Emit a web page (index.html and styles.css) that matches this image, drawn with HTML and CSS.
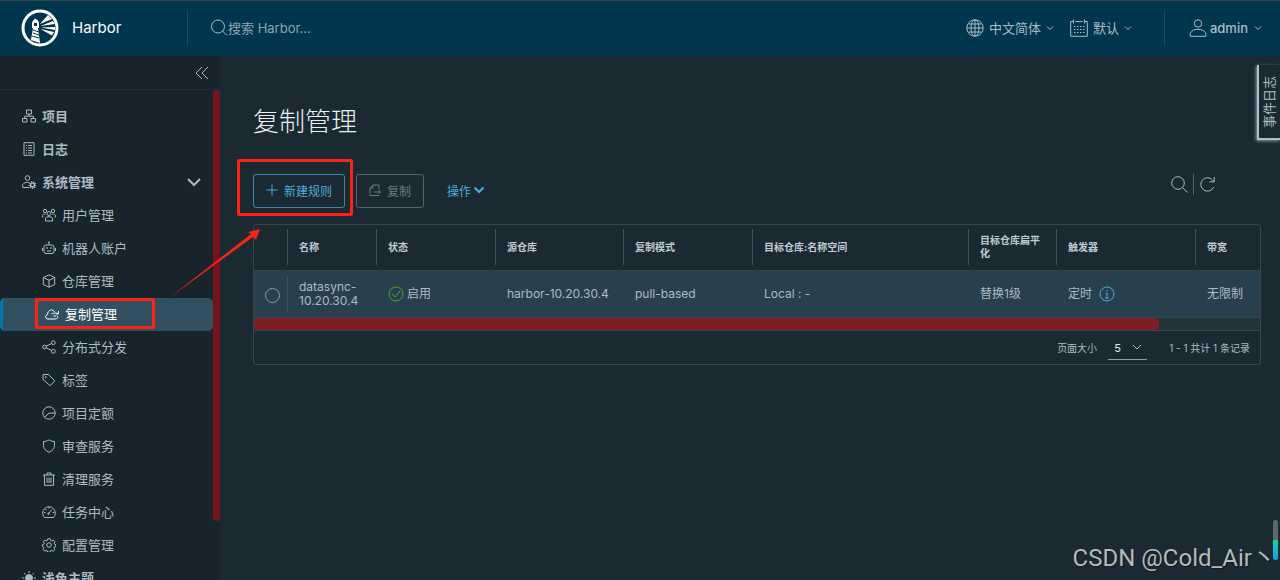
FILE: index.html
```html
<!DOCTYPE html>
<html lang="zh-CN">
<head>
    <meta charset="UTF-8">
    <meta name="viewport" content="width=device-width, initial-scale=1.0">
    <title>Harbor</title>
    <link rel="stylesheet" href="styles.css">
</head>
<body>
    <header class="header">
        <a class="brand" href="#">
            <svg class="logo" viewBox="0 0 38 38">
                <circle cx="19" cy="19" r="17" fill="none" stroke="#fff" stroke-width="3"/>
                <path fill="#fff" d="M11 14c0-2 2-3 3.500-4.500C16 11 18 12 18 14v5h-1l2 15-9-3 2-12h-1zM19 15l8-9 4 4zM19.500 17L32 12l2 3zM20 18.500l14-.5v3zM19.500 20L33 23l-2 3.500z"/>
                <path fill="#00364d" d="M13 14h3v3h-3z"/>
                <path stroke="#00364d" d="M12 21l6 2M12 24l6 2M11 27l7 2"/>
            </svg>
            <span>Harbor</span>
        </a>
        <label class="search">
            <svg class="icon-18" viewBox="0 0 18 18"><circle cx="8" cy="7.500" r="6.500"/><path d="M12.500 12l4.500 4.500"/></svg>
            <input type="text" placeholder="搜索 Harbor..." aria-label="搜索">
        </label>
        <div class="header-actions">
            <button type="button" class="lang">
                <svg class="icon-18" viewBox="0 0 18 18"><circle cx="9" cy="9" r="8.2"/><ellipse cx="9" cy="9" rx="4" ry="8.2"/><path d="M9 1v16M1 9h16M2.500 5h13M2.500 13h13"/></svg>
                <span>中文简体</span>
                <svg class="caret" viewBox="0 0 8 8"><path d="M1 2.500l3 3 3-3"/></svg>
            </button>
            <button type="button" class="datetime">
                <svg class="icon-18" viewBox="0 0 18 18"><path d="M3 2.500H.7v14.800h16.600V2.500H15M5.500 2.500h7M3.500.5v4M14.500.5v4"/><path stroke-dasharray="1.500 1.500" d="M4 7.500h11M4 10.500h11M4 13.500h11"/></svg>
                <span>默认</span>
                <svg class="caret" viewBox="0 0 8 8"><path d="M1 2.500l3 3 3-3"/></svg>
            </button>
            <button type="button" class="user">
                <svg class="icon-18" viewBox="0 0 18 18"><circle cx="9" cy="4.500" r="3.700"/><path d="M1.200 17.300v-3c1.500-3 4.500-4 7.800-4s6.300 1 7.800 4v3z"/></svg>
                <span>admin</span>
                <svg class="caret" viewBox="0 0 8 8"><path d="M1 2.500l3 3 3-3"/></svg>
            </button>
        </div>
    </header>

    <div class="content">
        <aside class="sidebar">
            <div class="collapse">
                <button type="button" aria-label="收起"><svg viewBox="0 0 14 14"><path d="M7 1L1 7l6 6M13 1L7 7l6 6"/></svg></button>
            </div>
            <div class="sidebar-body">
                <nav class="nav">
                    <a class="nav-group" href="#">
                        <svg viewBox="0 0 14 14"><path d="M4.500 1h5v4h-5zM.5 9.500h4.500V13H.5zM9 9.500h4.500V13H9zM7 5v2M2.700 9.500V7.200h8.600v2.300"/></svg>
                        <span>项目</span>
                    </a>
                    <a class="nav-group" href="#">
                        <svg viewBox="0 0 14 14"><path d="M2 .7h10v12.600H2zM4 3.500h1M4 6h1M4 8.500h1M4 11h1M6 3.500h4M6 6h4M6 8.500h4M6 11h4"/></svg>
                        <span>日志</span>
                    </a>
                    <a class="nav-group" href="#">
                        <svg viewBox="0 0 14 14"><circle cx="5.500" cy="3" r="2.300"/><path d="M7 12.500H.7v-3C2 7.500 4.500 7 7 7.500"/><circle cx="10.500" cy="10" r="2" stroke-width="1.500"/><path stroke-width="1.500" stroke-dasharray="1 1.200" d="M13.700 10a3.200 3.200 0 1 1-6.400 0 3.200 3.200 0 0 1 6.400 0"/></svg>
                        <span>系统管理</span>
                        <svg class="arrow" viewBox="0 0 14 14"><path d="M1 4l6 6 6-6"/></svg>
                    </a>
                    <div class="nav-children">
                        <a href="#">
                            <svg viewBox="0 0 14 14"><circle cx="7" cy="5.500" r="2"/><circle cx="3" cy="3" r="1.700"/><circle cx="11" cy="3" r="1.700"/><path d="M3.500 13v-3C4.500 8.300 9.500 8.300 10.500 10v3zM.7 9.500V7.200C1 6.300 2 6 3.500 6M13.300 9.500V7.200C13 6.300 12 6 10.500 6"/></svg>
                            <span>用户管理</span>
                        </a>
                        <a href="#">
                            <svg viewBox="0 0 14 14"><rect x="2" y="4" width="10" height="8.500" rx="2"/><path d="M7 4V1.500M.5 7v3M13.500 7v3M5 10h4"/><circle cx="7" cy="1.200" r=".5"/><circle cx="5" cy="7" r=".5"/><circle cx="9" cy="7" r=".5"/></svg>
                            <span>机器人账户</span>
                        </a>
                        <a href="#">
                            <svg viewBox="0 0 14 14"><path d="M7 .8l5.700 2.700v7L7 13.200l-5.700-2.700v-7zM1.300 3.500L7 6.300l5.700-2.800M7 6.300v6.900"/></svg>
                            <span>仓库管理</span>
                        </a>
                        <a class="active" href="#">
                            <svg viewBox="0 0 14 14"><path d="M12 8.500c1.500 1.500 0 3.500-1.500 3.500H3C0 12-.2 8 2.600 7.600 2.500 2.500 8 1.500 9.500 5M6.500 7c1.500-1.200 4-1.200 6.500-.5M13.500 4v2.800H11M8.500 9h2.500"/></svg>
                            <span>复制管理</span>
                        </a>
                        <a href="#">
                            <svg viewBox="0 0 14 14"><circle cx="2.500" cy="7" r="1.800"/><circle cx="11.300" cy="2.700" r="1.900"/><circle cx="11.300" cy="11.300" r="1.900"/><path d="M4 6.200l5.700-2.700M4 7.800l5.700 2.700"/></svg>
                            <span>分布式分发</span>
                        </a>
                        <a href="#">
                            <svg viewBox="0 0 14 14"><path d="M1 1.500h5.500l6.300 6.300-4.600 4.900L1 6.500z"/><circle cx="3.800" cy="4.200" r=".6"/></svg>
                            <span>标签</span>
                        </a>
                        <a href="#">
                            <svg viewBox="0 0 14 14"><circle cx="7" cy="7" r="6.200"/><path d="M2.500 11.200L7 7.200l6-.2"/></svg>
                            <span>项目定额</span>
                        </a>
                        <a href="#">
                            <svg viewBox="0 0 14 14"><path d="M7 .8c1.500 1.200 3.500 1.600 5.500 1.700v4c0 3-2 5.300-5.500 6.800-3.500-1.500-5.500-3.800-5.500-6.800v-4C3.500 2.400 5.500 2 7 .8z"/></svg>
                            <span>审查服务</span>
                        </a>
                        <a href="#">
                            <svg viewBox="0 0 14 14"><path d="M1 3h12M2.500 3v10.300h9V3M5 3V1h4v2M5 5.500v5.500M7 5.500v5.500M9 5.500v5.500"/></svg>
                            <span>清理服务</span>
                        </a>
                        <a href="#">
                            <svg viewBox="0 0 14 14"><path d="M2.500 12.500a6.300 6.300 0 1 1 9 0zM6.500 8.500l3.500-4M7 2v1.500M2 7.500h1.500M12 7.500h-1.500M3.500 4l1 1"/><circle cx="6.500" cy="8.700" r=".8"/></svg>
                            <span>任务中心</span>
                        </a>
                        <a href="#">
                            <svg viewBox="0 0 14 14"><circle cx="7" cy="7" r="2.300"/><path d="M5.800.8h2.400l.4 1.600 1.200.5 1.500-.9 1.600 1.600-.8 1.500.5 1.200 1.200.3v1.800l-1.300.5-.5 1.200.8 1.500-1.600 1.600-1.500-.8-1.200.5-.4 1.300H5.800l-.4-1.300-1.200-.5-1.500.8-1.600-1.600.9-1.500-.5-1.200L.5 8.400V6.600l1.200-.3.5-1.200-.9-1.500L2.900 2l1.500.9 1-.5z"/></svg>
                            <span>配置管理</span>
                        </a>
                    </div>
                    <a class="nav-group" href="#">
                        <svg viewBox="0 0 14 14"><circle cx="7" cy="7" r="3.500" fill="currentColor"/><path d="M7 0v2M7 12v2M0 7h2M12 7h2M2 2l1.500 1.500M12 2l-1.500 1.500M2 12l1.500-1.500M12 12l-1.500-1.500"/></svg>
                        <span>浅色主题</span>
                    </a>
                </nav>
                <div class="scroll-y"></div>
            </div>
        </aside>

        <main class="main">
            <h1>复制管理</h1>
            <div class="toolbar">
                <div class="marked">
                    <button type="button" class="btn btn-primary">
                        <svg viewBox="0 0 12 12"><path d="M6 .5v11M.5 6h11"/></svg>
                        <span>新建规则</span>
                    </button>
                </div>
                <button type="button" class="btn" disabled>
                    <svg viewBox="0 0 12 12"><path d="M10 5V1H4L1 4v7.500h9V11M4 1v3H1M5 8h6.500M9.500 6l2 2-2 2"/></svg>
                    <span>复制</span>
                </button>
                <button type="button" class="btn-link">
                    <span>操作</span>
                    <svg viewBox="0 0 12 12"><path d="M1.500 3.500L6 8l4.500-4.500"/></svg>
                </button>
                <div class="tools">
                    <button type="button" aria-label="搜索"><svg viewBox="0 0 17 17"><circle cx="7" cy="7" r="6.300"/><path d="M11.500 11.500l5 5"/></svg></button>
                    <button type="button" aria-label="刷新"><svg viewBox="0 0 17 17"><path d="M14.700 11A6.700 6.700 0 1 1 13.500 4l1.500 1.700M15.200 1v4.800h-4.700"/></svg></button>
                </div>
            </div>

            <div class="datagrid">
                <table>
                    <colgroup>
                        <col class="col-radio">
                        <col class="col-name">
                        <col class="col-status">
                        <col class="col-source">
                        <col class="col-mode">
                        <col>
                        <col class="col-flat">
                        <col class="col-trigger">
                        <col class="col-band">
                    </colgroup>
                    <thead>
                        <tr>
                            <th></th>
                            <th><div>名称</div></th>
                            <th><div>状态</div></th>
                            <th><div>源仓库</div></th>
                            <th><div>复制模式</div></th>
                            <th><div>目标仓库:名称空间</div></th>
                            <th><div>目标仓库扁平化</div></th>
                            <th><div>触发器</div></th>
                            <th><div>带宽</div></th>
                        </tr>
                    </thead>
                    <tbody>
                        <tr>
                            <td class="select"><input type="radio" name="rule" aria-label="datasync-10.20.30.4"></td>
                            <td class="name"><div>datasync-10.20.30.4</div></td>
                            <td><div><svg class="ok" viewBox="0 0 16 16"><circle cx="8" cy="8" r="7"/><path d="M4 8l3 3 5-6"/></svg>启用</div></td>
                            <td><div>harbor-10.20.30.4</div></td>
                            <td><div>pull-based</div></td>
                            <td><div>Local : -</div></td>
                            <td><div>替换1级</div></td>
                            <td><div>定时<svg class="info" viewBox="0 0 16 16"><circle cx="8" cy="8" r="7"/><path d="M8 4v1.500M6.500 7.300H8V12M6 12h4"/></svg></div></td>
                            <td><div>无限制</div></td>
                        </tr>
                    </tbody>
                </table>
                <div class="scroll-x"><div></div></div>
                <div class="datagrid-footer">
                    <label for="page-size">页面大小</label>
                    <div class="page-size">
                        <select id="page-size">
                            <option>5</option>
                            <option>15</option>
                            <option>25</option>
                        </select>
                        <svg viewBox="0 0 8 8"><path d="M0 2l4 4 4-4"/></svg>
                    </div>
                    <span>1 - 1 共计 1 条记录</span>
                </div>
            </div>
        </main>
    </div>

    <button type="button" class="event-log">事件日志</button>

    <svg class="pointer" viewBox="0 0 92 70"><path d="M0 69L82 5 79 3 91 0 87 11 84 8z"/></svg>
    <div class="meter"></div>
    <div class="watermark">CSDN @Cold_Air丶</div>
</body>
</html>
```
FILE: styles.css
```css
* {
    box-sizing: border-box;
}

body {
    margin: 0;
    height: 100vh;
    display: flex;
    flex-direction: column;
    overflow: hidden;
    position: relative;
    background-color: #1b2a32;
    color: #adbbc4;
    font-family: Inter, "Noto Sans CJK SC", sans-serif;
    font-size: 13px;
}

a {
    color: inherit;
    text-decoration: none;
}

button {
    background: none;
    border: none;
    padding: 0;
    color: inherit;
    font: inherit;
    cursor: pointer;
}

svg {
    fill: none;
    stroke: currentColor;
    flex-shrink: 0;
}

/* Header */
.header {
    height: 56px;
    flex-shrink: 0;
    display: flex;
    align-items: center;
    padding-bottom: 2px;
    background-color: #00364d;
    border-top: 1px solid #38434a;
    color: #a8bcc6;
}

.brand {
    display: flex;
    align-items: center;
    gap: 13px;
    width: 188px;
    height: 36px;
    padding-left: 21px;
    border-right: 1px solid #1c4a5e;
    color: #fff;
    font-size: 15px;
}

.logo {
    width: 38px;
    height: 38px;
    stroke: none;
}

.icon-18 {
    width: 18px;
    height: 18px;
}

.search {
    display: flex;
    align-items: center;
    margin-left: 22px;
}

.search input {
    width: 240px;
    padding: 0;
    border: none;
    outline: none;
    background: none;
    color: inherit;
    font: inherit;
}

.search input::placeholder {
    color: #8da5b1;
}

.header-actions {
    margin-left: auto;
    display: flex;
    align-items: center;
}

.header-actions button {
    display: flex;
    align-items: center;
    gap: 5px;
    height: 36px;
}

.caret {
    width: 8px;
    height: 8px;
}

.datetime {
    margin-left: 16px;
    padding-right: 32px;
}

.header-actions .user {
    gap: 3px;
    padding: 0 18px 0 24px;
    border-left: 1px solid #1c4a5e;
    font-weight: 500;
}

.user .caret {
    margin-left: 3px;
}

/* Sidebar */
.content {
    flex: 1;
    min-height: 0;
    display: flex;
}

.sidebar {
    width: 220px;
    flex-shrink: 0;
    display: flex;
    flex-direction: column;
    background-color: #17242b;
}

.collapse {
    height: 34px;
    flex-shrink: 0;
    display: flex;
    justify-content: flex-end;
    align-items: center;
    padding-right: 11px;
    border-bottom: 1px solid #202e36;
}

.collapse button {
    display: flex;
}

.collapse svg {
    width: 14px;
    height: 14px;
}

.sidebar-body {
    flex: 1;
    min-height: 0;
    display: flex;
    overflow: hidden;
}

.nav {
    flex: 1;
    padding-top: 10px;
}

.nav a {
    display: flex;
    align-items: center;
    gap: 6px;
    height: 33px;
    padding: 0 0 2px 42px;
}

.nav a svg {
    width: 14px;
    height: 14px;
}

.nav .nav-group {
    padding: 0 12px 2px 22px;
    font-weight: 700;
}

.nav .arrow {
    margin-left: auto;
    stroke-width: 2;
}

.nav .active {
    position: relative;
    border-left: 3px solid #0079ad;
    border-radius: 5px;
    background-color: #324f62;
    color: #fff;
}

.nav .active::after {
    content: "";
    position: absolute;
    inset: 0 58px 2px 32px;
    border: 3px solid #fb2314;
    border-radius: 2px;
}

.scroll-y {
    width: 7px;
    height: 431px;
    border-radius: 3px;
    background-color: #73151b;
}

/* Main */
.main {
    flex: 1;
    min-width: 0;
    padding: 46px 19px 0 33px;
}

h1 {
    margin: 0;
    color: #eaeef0;
    font-size: 26px;
    font-weight: 300;
    line-height: 40px;
}

.toolbar {
    display: flex;
    align-items: center;
    gap: 11px;
    margin-top: 32px;
    font-size: 12px;
}

.btn,
.btn-link,
.tools {
    display: flex;
    align-items: center;
}

.btn {
    gap: 6px;
    height: 34px;
    padding: 0 12px 2px;
    border: 1px solid #55646c;
    border-radius: 3px;
    color: #6b7b83;
}

.toolbar .btn-primary {
    border-color: #3a86a8;
    color: #4aaed9;
}

.btn svg,
.btn-link svg {
    width: 12px;
    height: 12px;
}

.marked {
    position: relative;
}

.marked::after {
    content: "";
    position: absolute;
    inset: -15px -8px -8px -16px;
    border: 3px solid #fb2314;
    border-radius: 2px;
    pointer-events: none;
}

.btn-link {
    margin-left: 12px;
    padding-bottom: 2px;
    color: #4aaed9;
}

.btn-link svg {
    margin-left: 2px;
    stroke-width: 2;
}

.tools {
    align-self: flex-start;
    margin-left: auto;
    margin-right: 40px;
}

.tools button {
    display: flex;
    padding: 2px 5px;
}

.tools button + button {
    border-left: 1px solid #55646c;
}

.tools svg {
    width: 17px;
    height: 17px;
}

/* Datagrid */
.datagrid {
    margin-top: 16px;
    border: 1px solid #36464f;
    border-radius: 3px;
}

table {
    width: 100%;
    table-layout: fixed;
    border-collapse: collapse;
}

.col-radio { width: 33px; }
.col-name { width: 89px; }
.col-status { width: 119px; }
.col-source { width: 128px; }
.col-mode { width: 129px; }
.col-flat { width: 88px; }
.col-trigger { width: 139px; }
.col-band { width: 65px; }

th,
td {
    padding: 0;
    text-align: left;
}

th {
    height: 45px;
    color: #c0cbd2;
    font-size: 10px;
    line-height: 13px;
}

th div,
td div {
    display: flex;
    align-items: center;
    height: 36px;
    padding: 0 11px;
    border-left: 1px solid transparent;
}

th div,
.name div {
    border-left-color: #42525b;
}

td {
    height: 47px;
    background-color: #283f4d;
    border-top: 1px solid #36464f;
    font-size: 12px;
    line-height: 14px;
}

td svg {
    width: 16px;
    height: 16px;
}

.ok {
    margin-right: 3px;
    color: #5aa220;
}

.info {
    margin-left: 7px;
    color: #4aaed9;
}

.select {
    text-align: center;
}

input[type="radio"] {
    appearance: none;
    width: 15px;
    height: 15px;
    margin: 4px 0 0 3px;
    border: 1px solid #8b9ba5;
    border-radius: 50%;
    vertical-align: middle;
}

.scroll-x {
    height: 14px;
    border-top: 1px solid #36464f;
    border-bottom: 1px solid #36464f;
    background-color: #213239;
}

.scroll-x div {
    width: 90%;
    height: 100%;
    border-radius: 3px;
    background-color: #7b1f24;
}

.datagrid-footer {
    display: flex;
    justify-content: flex-end;
    align-items: center;
    height: 33px;
    padding-right: 10px;
    font-size: 10px;
}

.page-size {
    position: relative;
    margin: 0 22px 0 11px;
}

.page-size select {
    display: block;
    appearance: none;
    width: 39px;
    height: 24px;
    padding: 2px 0 0 6px;
    border: none;
    border-bottom: 1px solid #8b9ba5;
    border-radius: 0;
    background: none;
    color: #eaeef0;
    font: inherit;
    font-size: 11px;
}

.page-size svg {
    position: absolute;
    top: 7px;
    right: 6px;
    width: 8px;
    height: 8px;
    pointer-events: none;
}

/* Floating items */
.event-log {
    position: absolute;
    top: 65px;
    right: 0;
    width: 23px;
    height: 75px;
    padding-left: 2px;
    border-right: 2px solid #b4bec4;
    border-top: 2px solid #b4bec4;
    box-shadow: 1px -1px 3px #8b9ba5;
    background-color: #1b2a32;
    writing-mode: vertical-rl;
    text-orientation: sideways;
    transform: rotate(180deg);
}

.pointer {
    position: absolute;
    top: 229px;
    left: 169px;
    width: 92px;
    height: 70px;
    fill: #fb2314;
    stroke: none;
    pointer-events: none;
}

.meter {
    position: absolute;
    right: 2px;
    bottom: 20px;
    width: 5px;
    height: 40px;
    border-radius: 3px;
    background: linear-gradient(#5c686e 50%, #12d69a 50%, #1b9cf5);
}

.watermark {
    position: absolute;
    right: 4px;
    bottom: 4px;
    color: #b5babd;
    font-family: Roboto, "Noto Sans CJK SC", sans-serif;
    font-size: 24px;
    line-height: 36px;
    white-space: nowrap;
    text-shadow: 1px 1px 1px #10181c;
}
```
